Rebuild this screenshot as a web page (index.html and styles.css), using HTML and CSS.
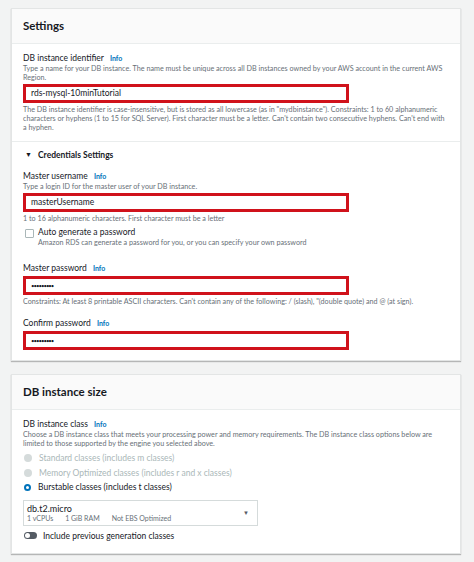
FILE: index.html
```html
<!DOCTYPE html>
<html lang="en">
<head>
    <meta charset="UTF-8">
    <meta name="viewport" content="width=device-width, initial-scale=1.0">
    <title>Settings</title>
    <link rel="stylesheet" href="styles.css">
</head>
<body>

    <div class="card">
        <div class="card-header">Settings</div>
        <div class="card-body">
            <div class="field">
                <div class="label">DB instance identifier <span class="info">Info</span></div>
                <div class="desc">Type a name for your DB instance. The name must be unique across all DB instances owned by your AWS account in the current AWS Region.</div>
                <div class="input marked">rds-mysql-10minTutorial</div>
                <div class="hint">The DB instance identifier is case-insensitive, but is stored as all lowercase (as in "mydbinstance"). Constraints: 1 to 60 alphanumeric characters or hyphens (1 to 15 for SQL Server). First character must be a letter. Can't contain two consecutive hyphens. Can't end with a hyphen.</div>
            </div>
        </div>
        <div class="card-body section">
            <div class="toggle-title"><span class="caret">&#9660;</span> Credentials Settings</div>

            <div class="field">
                <div class="label">Master username <span class="info">Info</span></div>
                <div class="desc">Type a login ID for the master user of your DB instance.</div>
                <div class="input marked">masterUsername</div>
                <div class="hint">1 to 16 alphanumeric characters. First character must be a letter</div>
            </div>

            <div class="check-row">
                <span class="checkbox"></span>
                <div>
                    <div class="check-label">Auto generate a password</div>
                    <div class="hint">Amazon RDS can generate a password for you, or you can specify your own password</div>
                </div>
            </div>

            <div class="field gap-lg">
                <div class="label">Master password <span class="info">Info</span></div>
                <div class="input marked pw">&#8226;&#8226;&#8226;&#8226;&#8226;&#8226;&#8226;&#8226;&#8226;</div>
                <div class="hint">Constraints: At least 8 printable ASCII characters. Can't contain any of the following: / (slash), "(double quote) and @ (at sign).</div>
            </div>

            <div class="field gap">
                <div class="label">Confirm password <span class="info">Info</span></div>
                <div class="input marked pw">&#8226;&#8226;&#8226;&#8226;&#8226;&#8226;&#8226;&#8226;&#8226;</div>
            </div>
        </div>
    </div>

    <div class="card">
        <div class="card-header">DB instance size</div>
        <div class="card-body last">
            <div class="label">DB instance class <span class="info">Info</span></div>
            <div class="desc">Choose a DB instance class that meets your processing power and memory requirements. The DB instance class options below are limited to those supported by the engine you selected above.</div>

            <div class="radio-list">
                <div class="radio-row disabled"><span class="radio"></span>Standard classes (includes m classes)</div>
                <div class="radio-row disabled"><span class="radio"></span>Memory Optimized classes (includes r and x classes)</div>
                <div class="radio-row"><span class="radio on"></span>Burstable classes (includes t classes)</div>
            </div>

            <div class="select">
                <div>
                    <div class="select-value">db.t2.micro</div>
                    <div class="select-meta"><span>1 vCPUs</span><span>1 GiB RAM</span><span>Not EBS Optimized</span></div>
                </div>
                <span class="arrow">&#9660;</span>
            </div>

            <div class="switch-row">
                <span class="switch"></span>
                Include previous generation classes
            </div>
        </div>
    </div>

</body>
</html>
```

FILE: styles.css
```css
body {
    margin: 0;
    padding: 8px 13px 8px 11px;
    background-color: #f2f3f3;
    font-family: Lato, "Open Sans", Arial, sans-serif;
    color: #16191f;
}
.card {
    background-color: #fff;
    border: 1px solid #e3e5e5;
    box-shadow: 0 1px 1px rgba(0, 0, 0, 0.25);
    margin-bottom: 13px;
}
.card-header {
    background-color: #fafafa;
    border-bottom: 1px solid #eaeded;
    height: 34px;
    line-height: 34px;
    padding: 0 11px;
    font-size: 11.5px;
    font-weight: bold;
}
.card-body {
    padding: 8px 11px 9px 11px;
}
.card-body.last {
    padding-bottom: 12px;
}
.section {
    border-top: 1px solid #eaeded;
    padding-top: 6px;
    padding-bottom: 10px;
}
.label {
    font-size: 8.5px;
    line-height: 12px;
}
.info {
    color: #0073bb;
    font-size: 7px;
    font-weight: bold;
    margin-left: 4px;
}
.desc, .hint {
    font-size: 7.2px;
    line-height: 9px;
    color: #687078;
}
.hint {
    margin-top: 2px;
}
.input {
    width: 315px;
    height: 13px;
    border: 3px solid #d0121b;
    margin-top: 2px;
    padding: 0 0 0 5px;
    font-size: 8.5px;
    line-height: 13px;
}
.pw {
    font-size: 6px;
    letter-spacing: -1px;
}
.toggle-title {
    font-size: 8.5px;
    font-weight: bold;
    line-height: 12px;
    margin-bottom: 9px;
}
.caret {
    font-size: 7px;
    margin: 0 4px 0 2px;
    vertical-align: 1px;
}
.check-row {
    display: flex;
    gap: 4px;
    margin-top: 4px;
}
.checkbox {
    width: 7px;
    height: 7px;
    border: 1px solid #aab7b8;
    border-radius: 1px;
    margin: 2px 0 0 2px;
}
.check-label {
    font-size: 8.5px;
    line-height: 11px;
}
.check-row .hint {
    margin-top: 0;
}
.gap-lg {
    margin-top: 15px;
}
.gap {
    margin-top: 11px;
}
.radio-list {
    margin-top: 3px;
}
.radio-row {
    display: flex;
    align-items: center;
    gap: 7px;
    font-size: 8.5px;
    line-height: 14.5px;
}
.radio-row.disabled {
    color: #aab7b8;
}
.radio {
    width: 8px;
    height: 8px;
    border-radius: 50%;
    background-color: #d5dbdb;
    margin-left: 1px;
}
.radio.on {
    width: 3px;
    height: 3px;
    background-color: #fff;
    border: 2.5px solid #0073bb;
}
.select {
    display: flex;
    justify-content: space-between;
    align-items: center;
    width: 222px;
    height: 24px;
    border: 1px solid #d5dbdb;
    margin-top: 5px;
    padding: 0 8px 0 3px;
}
.select-value {
    font-size: 9px;
    line-height: 11px;
}
.select-meta {
    display: flex;
    gap: 12px;
    font-size: 7px;
    line-height: 9px;
    color: #687078;
}
.arrow {
    font-size: 6px;
    color: #545b64;
}
.switch-row {
    display: flex;
    align-items: center;
    gap: 6px;
    font-size: 8.5px;
    margin-top: 5px;
}
.switch {
    position: relative;
    width: 13px;
    height: 7px;
    border-radius: 4px;
    background-color: #545b64;
    margin-left: 1px;
}
.switch::after {
    content: "";
    position: absolute;
    left: 1px;
    top: 1px;
    width: 5px;
    height: 5px;
    border-radius: 50%;
    background-color: #fff;
}
```
